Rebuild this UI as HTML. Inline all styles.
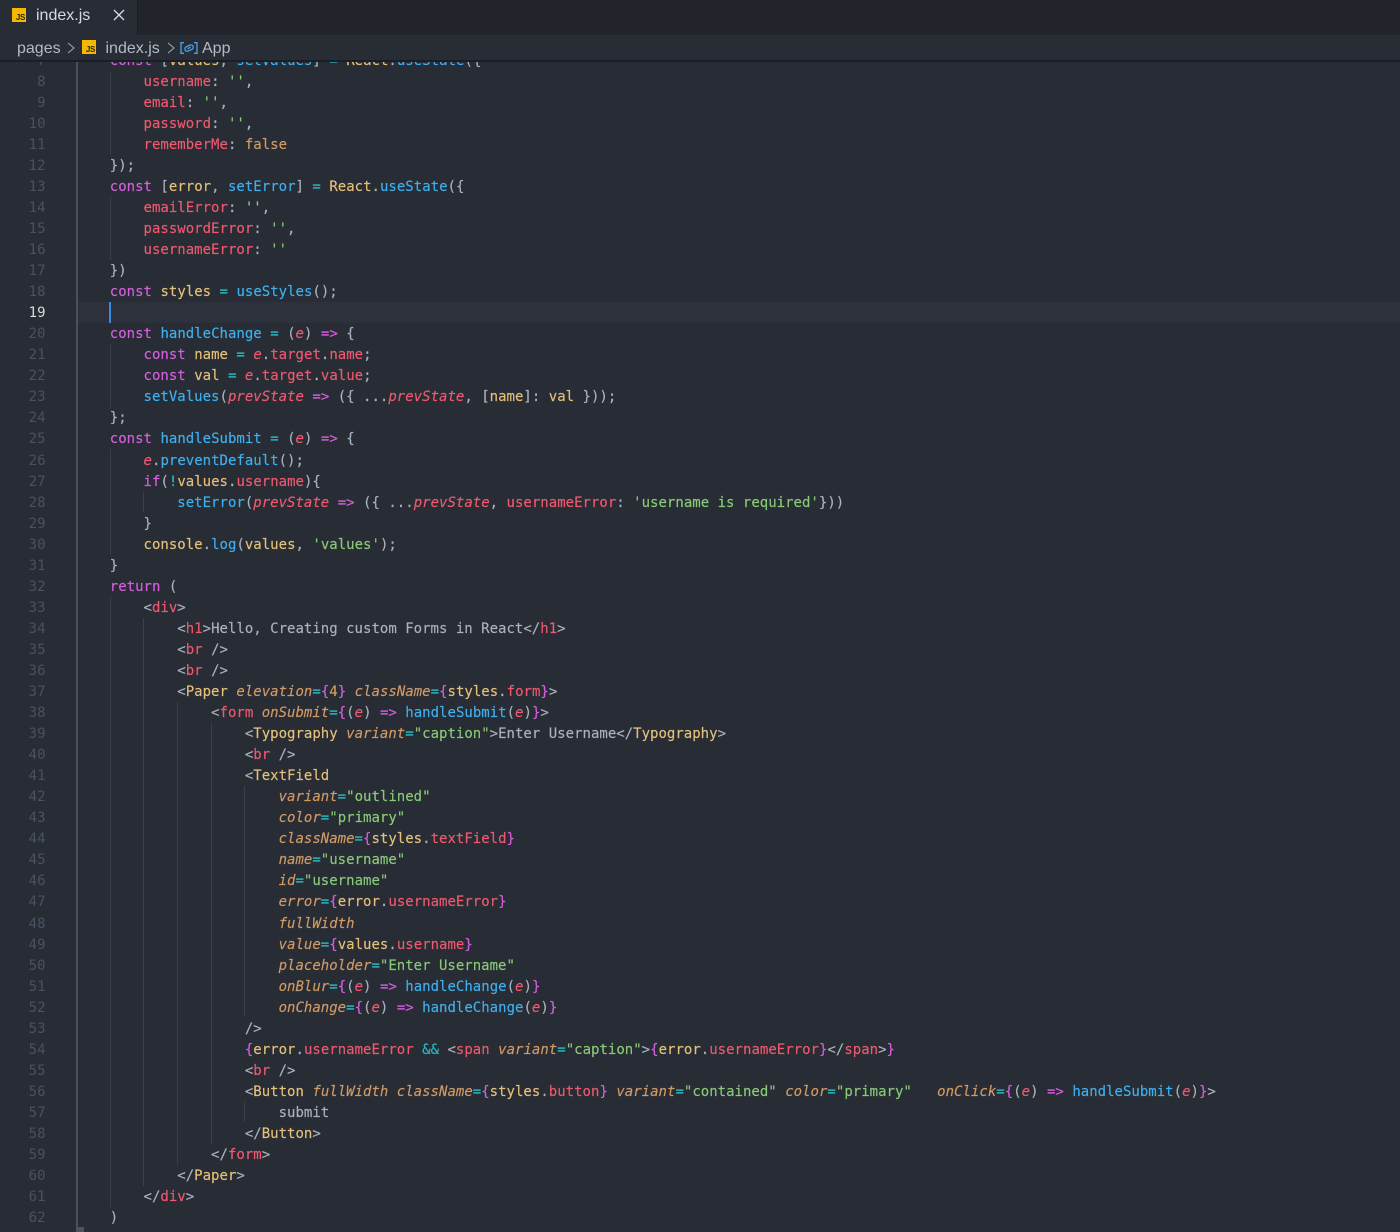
<!DOCTYPE html>
<html><head><meta charset="utf-8">
<style>
html,body{margin:0;padding:0;background:#282c34;width:1400px;height:1232px;overflow:hidden}
#tabs{position:absolute;left:0;top:0;width:1400px;height:35px;background:#21252b}
#tab{position:absolute;left:0;top:0;width:138px;height:35px;background:#282c34;border-right:1px solid #1c1f25;box-sizing:border-box}
.ui{position:absolute;font:16px/20px "Liberation Sans",sans-serif;color:#b4bac5;white-space:pre}
.js{position:absolute;width:14px;height:14px;background:#f5b800}
.js i{position:absolute;right:1px;bottom:0;font:bold 8px/9px "Liberation Sans",sans-serif;color:#2b2400;font-style:normal;letter-spacing:-.3px}
#crumb{position:absolute;left:0;top:35px;width:1400px;height:25px;background:#282c34}
#shadow{position:absolute;left:0;top:60px;width:1400px;height:2px;background:#1b1e25;z-index:5}
#ed{position:absolute;left:0;top:61px;width:1400px;height:1171px;overflow:hidden}
.hl{position:absolute;left:77px;top:241px;width:1323px;height:21px;background:#2c313c}
.g{position:absolute;width:1px;background:#3b4048}
#g0{position:absolute;left:76px;top:0;width:1.5px;height:1171px;background:#4b5059}
#cur{position:absolute;left:109px;top:241px;width:2px;height:21px;background:#3d8be0}
#thumb{position:absolute;left:76px;top:1166px;width:8px;height:5px;background:#4b5262}
#n,#c{position:absolute;top:-10.4px;font:14px/21.04px "DejaVu Sans Mono","Liberation Mono",monospace;white-space:pre;margin:0}
#n{left:0;width:45.5px;text-align:right;color:#495162}
#n b{font-weight:normal;color:#d7dae0}
#c{left:76px;color:#abb2bf;letter-spacing:.012px;-webkit-text-stroke:.15px}
.k{color:#d55fde}.y{color:#e5c07b}.b{color:#3eb0ef}.o{color:#2bbac5}.r{color:#ef596f}.s{color:#89ca78}.d{color:#d19a66}
.i{font-style:italic}.p{color:#d55fde}
</style></head><body>
<div id="tabs"><div id="tab"></div></div>
<div class="js" style="left:12px;top:8px"><i>JS</i></div>
<div class="ui" style="left:36px;top:6px;color:#d7dae0">index.js</div>
<svg style="position:absolute;left:113px;top:9px" width="12" height="12" viewBox="0 0 12 12"><path d="M1 1L11 11M11 1L1 11" stroke="#d7dae0" stroke-width="1.3" fill="none"/></svg>
<div id="crumb"></div>
<div class="ui" style="left:17px;top:39px">pages</div>
<svg style="position:absolute;left:67px;top:42px" width="8" height="12" viewBox="0 0 8 12"><path d="M1 1L7 6L1 11" stroke="#a0a6b1" stroke-width="1.1" fill="none"/></svg>
<div class="js" style="left:82px;top:40px"><i>JS</i></div>
<div class="ui" style="left:105.5px;top:39px">index.js</div>
<svg style="position:absolute;left:167px;top:42px" width="8" height="12" viewBox="0 0 8 12"><path d="M1 1L7 6L1 11" stroke="#a0a6b1" stroke-width="1.1" fill="none"/></svg>
<svg style="position:absolute;left:180px;top:42px" width="18" height="12" viewBox="0 0 18 12" fill="none" stroke="#4aa5e8" stroke-width="1.3"><path d="M4 .7H1V11.3H4M14 .7H17V11.3H14"/><rect x="4.6" y="3.8" width="8.8" height="4.6" rx="2.3" transform="rotate(-25 9 6)"/><path d="M7.5 6.8L10.5 5.2"/></svg>
<div class="ui" style="left:202px;top:39px">App</div>
<div id="ed">
<div class="hl"></div>
<div id="g0"></div>
<div class="g" style="left:110px;top:10px;height:84px"></div>
<div class="g" style="left:110px;top:136px;height:63px"></div>
<div class="g" style="left:110px;top:283px;height:63px"></div>
<div class="g" style="left:110px;top:388px;height:106px"></div>
<div class="g" style="left:110px;top:536px;height:610px"></div>
<div class="g" style="left:143px;top:430px;height:21px"></div>
<div class="g" style="left:143px;top:557px;height:568px"></div>
<div class="g" style="left:177px;top:641px;height:463px"></div>
<div class="g" style="left:211px;top:662px;height:421px"></div>
<div class="g" style="left:244px;top:725px;height:231px"></div>
<div class="g" style="left:244px;top:1040px;height:21px"></div>
<div id="cur"></div>
<div id="thumb"></div>
<pre id="n">7
8
9
10
11
12
13
14
15
16
17
18
<b>19</b>
20
21
22
23
24
25
26
27
28
29
30
31
32
33
34
35
36
37
38
39
40
41
42
43
44
45
46
47
48
49
50
51
52
53
54
55
56
57
58
59
60
61
62</pre>
<pre id="c">    <span class="k">const</span> [<span class="y">values</span>, <span class="b">setValues</span>] <span class="o">=</span> <span class="y">React</span>.<span class="b">useState</span>({
        <span class="r">username</span>: <span class="s">''</span>,
        <span class="r">email</span>: <span class="s">''</span>,
        <span class="r">password</span>: <span class="s">''</span>,
        <span class="r">rememberMe</span>: <span class="d">false</span>
    });
    <span class="k">const</span> [<span class="y">error</span>, <span class="b">setError</span>] <span class="o">=</span> <span class="y">React</span>.<span class="b">useState</span>({
        <span class="r">emailError</span>: <span class="s">''</span>,
        <span class="r">passwordError</span>: <span class="s">''</span>,
        <span class="r">usernameError</span>: <span class="s">''</span>
    })
    <span class="k">const</span> <span class="y">styles</span> <span class="o">=</span> <span class="b">useStyles</span>();

    <span class="k">const</span> <span class="b">handleChange</span> <span class="o">=</span> (<span class="r i">e</span>) <span class="k">=&gt;</span> {
        <span class="k">const</span> <span class="y">name</span> <span class="o">=</span> <span class="r i">e</span>.<span class="r">target</span>.<span class="r">name</span>;
        <span class="k">const</span> <span class="y">val</span> <span class="o">=</span> <span class="r i">e</span>.<span class="r">target</span>.<span class="r">value</span>;
        <span class="b">setValues</span>(<span class="r i">prevState</span> <span class="k">=&gt;</span> ({ ...<span class="r i">prevState</span>, [<span class="y">name</span>]: <span class="y">val</span> }));
    };
    <span class="k">const</span> <span class="b">handleSubmit</span> <span class="o">=</span> (<span class="r i">e</span>) <span class="k">=&gt;</span> {
        <span class="r i">e</span>.<span class="b">preventDefault</span>();
        <span class="k">if</span>(<span class="o">!</span><span class="y">values</span>.<span class="r">username</span>){
            <span class="b">setError</span>(<span class="r i">prevState</span> <span class="k">=&gt;</span> ({ ...<span class="r i">prevState</span>, <span class="r">usernameError</span>: <span class="s">'username is required'</span>}))
        }
        <span class="y">console</span>.<span class="b">log</span>(<span class="y">values</span>, <span class="s">'values'</span>);
    }
    <span class="k">return</span> (
        &lt;<span class="r">div</span>&gt;
            &lt;<span class="r">h1</span>&gt;Hello, Creating custom Forms in React&lt;/<span class="r">h1</span>&gt;
            &lt;<span class="r">br</span> /&gt;
            &lt;<span class="r">br</span> /&gt;
            &lt;<span class="y">Paper</span> <span class="d i">elevation</span><span class="o">=</span><span class="k">{</span><span class="d">4</span><span class="k">}</span> <span class="d i">className</span><span class="o">=</span><span class="k">{</span><span class="y">styles</span>.<span class="r">form</span><span class="k">}</span>&gt;
                &lt;<span class="r">form</span> <span class="d i">onSubmit</span><span class="o">=</span><span class="k">{</span>(<span class="r i">e</span>) <span class="k">=&gt;</span> <span class="b">handleSubmit</span>(<span class="r i">e</span>)<span class="k">}</span>&gt;
                    &lt;<span class="y">Typography</span> <span class="d i">variant</span><span class="o">=</span><span class="s">"caption"</span>&gt;Enter Username&lt;/<span class="y">Typography</span>&gt;
                    &lt;<span class="r">br</span> /&gt;
                    &lt;<span class="y">TextField</span>
                        <span class="d i">variant</span><span class="o">=</span><span class="s">"outlined"</span>
                        <span class="d i">color</span><span class="o">=</span><span class="s">"primary"</span>
                        <span class="d i">className</span><span class="o">=</span><span class="k">{</span><span class="y">styles</span>.<span class="r">textField</span><span class="k">}</span>
                        <span class="d i">name</span><span class="o">=</span><span class="s">"username"</span>
                        <span class="d i">id</span><span class="o">=</span><span class="s">"username"</span>
                        <span class="d i">error</span><span class="o">=</span><span class="k">{</span><span class="y">error</span>.<span class="r">usernameError</span><span class="k">}</span>
                        <span class="d i">fullWidth</span>
                        <span class="d i">value</span><span class="o">=</span><span class="k">{</span><span class="y">values</span>.<span class="r">username</span><span class="k">}</span>
                        <span class="d i">placeholder</span><span class="o">=</span><span class="s">"Enter Username"</span>
                        <span class="d i">onBlur</span><span class="o">=</span><span class="k">{</span>(<span class="r i">e</span>) <span class="k">=&gt;</span> <span class="b">handleChange</span>(<span class="r i">e</span>)<span class="k">}</span>
                        <span class="d i">onChange</span><span class="o">=</span><span class="k">{</span>(<span class="r i">e</span>) <span class="k">=&gt;</span> <span class="b">handleChange</span>(<span class="r i">e</span>)<span class="k">}</span>
                    /&gt;
                    <span class="k">{</span><span class="y">error</span>.<span class="r">usernameError</span> <span class="o">&amp;&amp;</span> &lt;<span class="r">span</span> <span class="d i">variant</span><span class="o">=</span><span class="s">"caption"</span>&gt;<span class="k">{</span><span class="y">error</span>.<span class="r">usernameError</span><span class="k">}</span>&lt;/<span class="r">span</span>&gt;<span class="k">}</span>
                    &lt;<span class="r">br</span> /&gt;
                    &lt;<span class="y">Button</span> <span class="d i">fullWidth</span> <span class="d i">className</span><span class="o">=</span><span class="k">{</span><span class="y">styles</span>.<span class="r">button</span><span class="k">}</span> <span class="d i">variant</span><span class="o">=</span><span class="s">"contained"</span> <span class="d i">color</span><span class="o">=</span><span class="s">"primary"</span>   <span class="d i">onClick</span><span class="o">=</span><span class="k">{</span>(<span class="r i">e</span>) <span class="k">=&gt;</span> <span class="b">handleSubmit</span>(<span class="r i">e</span>)<span class="k">}</span>&gt;
                        submit
                    &lt;/<span class="y">Button</span>&gt;
                &lt;/<span class="r">form</span>&gt;
            &lt;/<span class="y">Paper</span>&gt;
        &lt;/<span class="r">div</span>&gt;
    )</pre>
</div>
<div id="shadow"></div>
</body></html>
